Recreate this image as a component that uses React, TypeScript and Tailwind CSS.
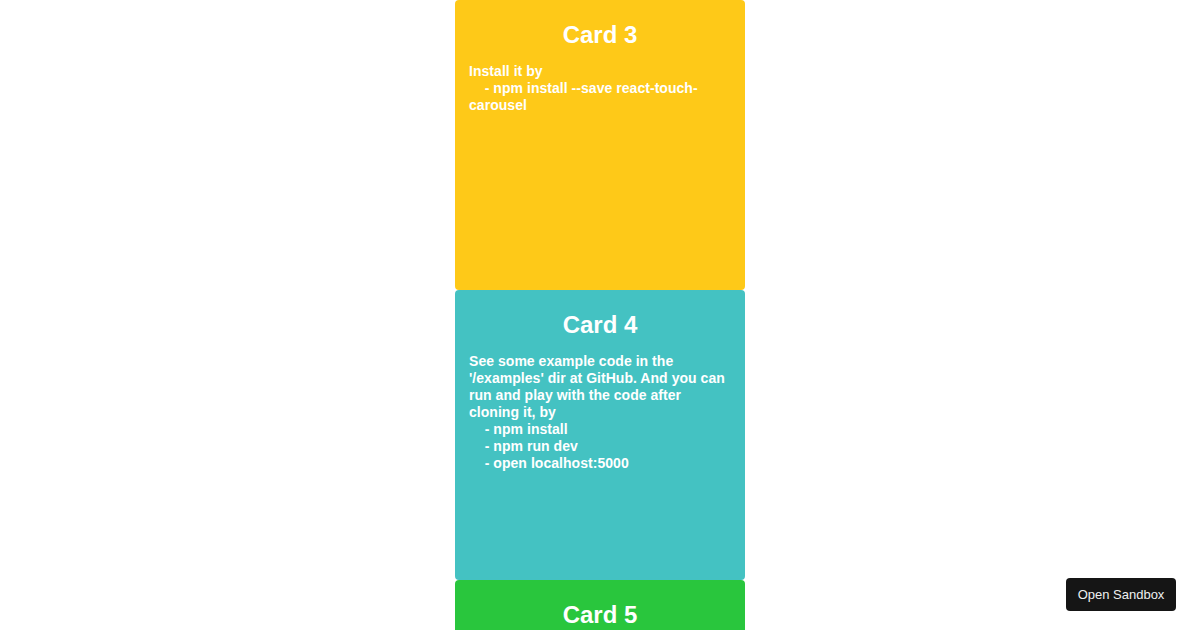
import React from 'react';

const cards = [
  {
    title: 'Card 3',
    bg: 'bg-[#fec918]',
    text: 'Install it by\n    - npm install --save react-touch-carousel',
  },
  {
    title: 'Card 4',
    bg: 'bg-[#44c2c2]',
    text:
      "See some example code in the '/examples' dir at GitHub. And you can run and play with the code after cloning it, by\n    - npm install\n    - npm run dev\n    - open localhost:5000",
  },
  {
    title: 'Card 5',
    bg: 'bg-[#29c63d]',
    text: '',
  },
];

const App: React.FC = () => {
  return (
    <div className="relative h-[630px] w-[1200px] overflow-hidden bg-white font-['Liberation_Sans',Arial,sans-serif]">
      <div className="flex flex-col items-center">
        {cards.map(card => (
          <div key={card.title} className={`h-[290px] w-[290px] shrink-0 rounded-[4px] px-[14px] text-white ${card.bg}`}>
            <h2 className="pt-[21px] text-center text-[24px] font-bold leading-[28px]">{card.title}</h2>
            <p className="mt-[14px] whitespace-pre-wrap text-[14px] font-bold leading-[17px] tracking-[0.04px]">{card.text}</p>
          </div>
        ))}
      </div>
      <button className="absolute bottom-[19px] right-[24px] h-[33px] w-[110px] rounded-[4px] bg-[#151515] text-center text-[13px] text-[#eef0f0]">
        Open Sandbox
      </button>
    </div>
  );
};

export default App;
